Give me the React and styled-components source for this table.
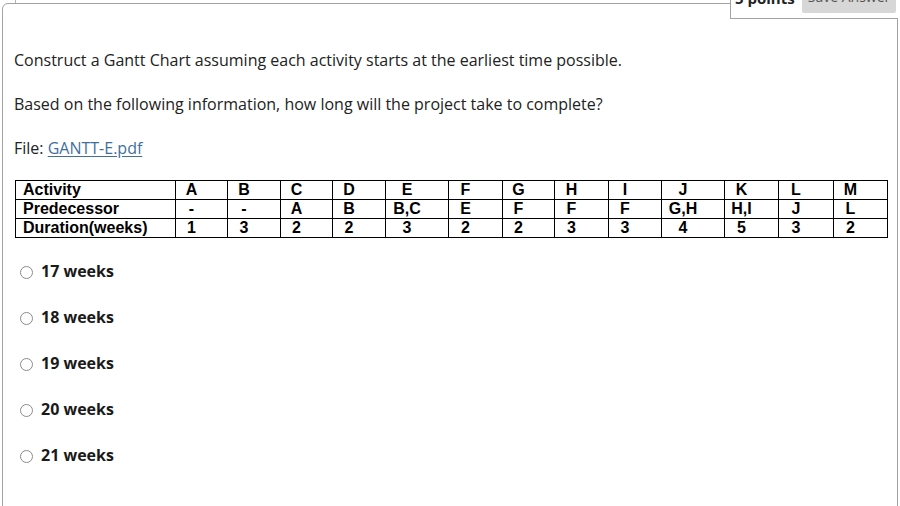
import React from "react";
import styled, { createGlobalStyle } from "styled-components";

const Global = createGlobalStyle`
  html, body {
    margin: 0;
    padding: 0;
    background: #ffffff;
    overflow: hidden;
  }
  body {
    font-family: "Open Sans", "Noto Sans", sans-serif;
    color: #222;
  }
`;

const Page = styled.div`
  position: relative;
  width: 900px;
  height: 506px;
  overflow: hidden;
`;

const TopTick = styled.span`
  position: absolute;
  left: 15px;
  top: 0;
  width: 1px;
  height: 3px;
  background: #b5b5b5;
`;

const PointsBar = styled.div`
  position: absolute;
  left: 730px;
  top: 0;
  width: 167px;
  height: 18px;
  background: #fff;
  border-left: 1px solid #a3a3a3;
  border-bottom: 1px solid #a3a3a3;
  display: flex;
  align-items: flex-start;
  overflow: hidden;
`;

const Points = styled.span`
  margin: -12px 0 0 4px;
  font-size: 15px;
  line-height: 20px;
  font-weight: 700;
  color: #222;
  white-space: nowrap;
`;

const SaveButton = styled.button`
  margin-left: auto;
  margin-right: 2px;
  width: 94px;
  height: 13px;
  border: none;
  border-radius: 0 0 2px 2px;
  background: #d7d7d7;
  padding: 0;
  overflow: hidden;
  display: flex;
  justify-content: center;
  align-items: flex-start;
  font-family: "Open Sans", sans-serif;
  font-size: 14px;
  color: #555;
  & > span {
    margin-top: -13px;
    line-height: 20px;
    white-space: nowrap;
  }
`;

const Card = styled.div`
  margin: 3px 2px 0 2px;
  height: 560px;
  border: 1px solid #a3a3a3;
  border-radius: 6px;
  padding: 44px 11px 0 11px;
  box-sizing: border-box;
`;

const Para = styled.p`
  margin: 0 0 20px 0;
  font-size: 16px;
  line-height: 24px;
  color: #222;
`;

const FileLink = styled.a`
  color: #3f6f9f;
  text-decoration: underline;
  text-underline-offset: 2px;
`;

const Table = styled.table`
  margin-left: 1px;
  border-collapse: collapse;
  table-layout: fixed;
  width: 872px;
  font-family: "Liberation Sans", Arial, sans-serif;
  font-weight: 700;
  font-size: 16px;
  color: #000;
`;

const Cell = styled.td`
  border: 1px solid #000;
  padding: ${(p) => (p.$head ? "0 0 0 7px" : "0 20px 0 0")};
  height: 18px;
  line-height: 18px;
  text-align: ${(p) => (p.$head ? "left" : "center")};
  white-space: nowrap;
  overflow: hidden;
`;

const Options = styled.div`
  margin-top: 21px;
  display: flex;
  flex-direction: column;
  gap: 22px;
`;

const Option = styled.label`
  display: flex;
  align-items: center;
  gap: 8px;
  padding-left: 6px;
  height: 24px;
  font-size: 16px;
  line-height: 24px;
  font-weight: 700;
  color: #1a1a1a;
`;

const Radio = styled.span`
  width: 11px;
  height: 11px;
  border: 1px solid #8c8c8c;
  border-radius: 50%;
  background: #fff;
  margin-top: 3px;
  flex: none;
`;

const widths = [160, 52, 53, 52, 53, 63, 54, 52, 54, 53, 63, 54, 55, 54];

const rows = [
  ["Activity", "A", "B", "C", "D", "E", "F", "G", "H", "I", "J", "K", "L", "M"],
  ["Predecessor", "-", "-", "A", "B", "B,C", "E", "F", "F", "F", "G,H", "H,I", "J", "L"],
  ["Duration(weeks)", "1", "3", "2", "2", "3", "2", "2", "3", "3", "4", "5", "3", "2"],
];

const answers = ["17 weeks", "18 weeks", "19 weeks", "20 weeks", "21 weeks"];

export default function App() {
  return (
    <Page>
      <Global />
      <TopTick />
      <Card>
        <Para>Construct a Gantt Chart assuming each activity starts at the earliest time possible.</Para>
        <Para>Based on the following information, how long will the project take to complete?</Para>
        <Para>
          File: <FileLink href="#">GANTT-E.pdf</FileLink>
        </Para>
        <Table>
          <colgroup>
            {widths.map((w, i) => (
              <col key={i} style={{ width: w }} />
            ))}
          </colgroup>
          <tbody>
            {rows.map((r, ri) => (
              <tr key={ri}>
                {r.map((c, ci) => (
                  <Cell key={ci} $head={ci === 0}>
                    {c}
                  </Cell>
                ))}
              </tr>
            ))}
          </tbody>
        </Table>
        <Options>
          {answers.map((a) => (
            <Option key={a}>
              <Radio />
              {a}
            </Option>
          ))}
        </Options>
      </Card>
      <PointsBar>
        <Points>5 points</Points>
        <SaveButton>
          <span>Save Answer</span>
        </SaveButton>
      </PointsBar>
    </Page>
  );
}
